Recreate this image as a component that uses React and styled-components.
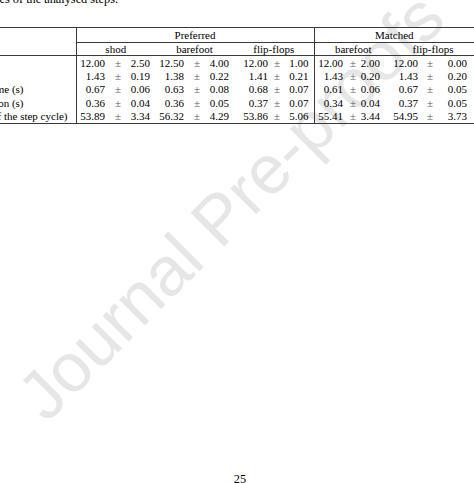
import styled, { createGlobalStyle } from 'styled-components';

const GlobalStyle = createGlobalStyle`
  html, body {
    margin: 0;
    padding: 0;
    background: #ffffff;
  }
`;

const groups = [
  { name: 'shod', cols: [35, 14, 30], pad: [6, 5] },
  { name: 'barefoot', cols: [35, 14, 30], pad: [6, 5] },
  { name: 'flip-flops', cols: [36, 14, 30], pad: [2, 5] },
  { name: 'barefoot', cols: [32, 14, 32], pad: [3, 12], divider: true },
  { name: 'flip-flops', cols: [31, 14, 37], pad: [5, 7] },
];

const rows = [
  {
    label: 'Number of steps',
    trail: 90,
    values: [['12.00', '2.50'], ['12.50', '4.00'], ['12.00', '1.00'], ['12.00', '2.00'], ['12.00', '0.00']],
  },
  {
    label: 'Step length (m)',
    trail: 90,
    values: [['1.43', '0.19'], ['1.38', '0.22'], ['1.41', '0.21'], ['1.43', '0.20'], ['1.43', '0.20']],
  },
  {
    label: 'Step time (s)',
    trail: 52,
    values: [['0.67', '0.06'], ['0.63', '0.08'], ['0.68', '0.07'], ['0.61', '0.06'], ['0.67', '0.05']],
  },
  {
    label: 'Swing duration (s)',
    trail: 52,
    values: [['0.36', '0.04'], ['0.36', '0.05'], ['0.37', '0.07'], ['0.34', '0.04'], ['0.37', '0.05']],
  },
  {
    label: 'Stance phase (% of the step cycle)',
    trail: 8,
    values: [['53.89', '3.34'], ['56.32', '4.29'], ['53.86', '5.06'], ['55.41', '3.44'], ['54.95', '3.73']],
  },
];

const App = () => {
  return (
    <>
      <GlobalStyle />
      <Page>
        <Watermark>Journal Pre-proofs</Watermark>

        <Caption>
          <span>Table 2. Means and standard deviations of the spatiotemporal features of the analysed steps.</span>
        </Caption>

        <Table>
          <colgroup>
            <col style={{ width: 76 }} />
            {groups.map((g, gi) =>
              g.cols.map((w, ci) => <col key={`${gi}-${ci}`} style={{ width: w }} />)
            )}
          </colgroup>
          <thead>
            <HeadRow $height={15}>
              <LabelHead rowSpan={2} />
              <GroupHead colSpan={9}>Preferred</GroupHead>
              <GroupHead colSpan={6} $divider>
                Matched
              </GroupHead>
            </HeadRow>
            <HeadRow $height={13}>
              {groups.map((g, gi) => (
                <GroupHead key={gi} colSpan={3} $divider={g.divider}>
                  {g.name}
                </GroupHead>
              ))}
            </HeadRow>
          </thead>
          <tbody>
            {rows.map((r, ri) => (
              <DataRow key={ri} $last={ri === rows.length - 1}>
                <LabelCell>
                  <LabelText $trail={r.trail}>
                    <span>{r.label}</span>
                  </LabelText>
                </LabelCell>
                {r.values.map(([m, sd], gi) => (
                  <Group key={gi} mean={m} sd={sd} group={groups[gi]} />
                ))}
              </DataRow>
            ))}
          </tbody>
        </Table>

        <Footer>25</Footer>
      </Page>
    </>
  );
};

const Group = ({ mean, sd, group }) => (
  <>
    <Num $pad={group.pad[0]} $divider={group.divider}>
      {mean}
    </Num>
    <Pm>±</Pm>
    <Num $pad={group.pad[1]}>{sd}</Num>
  </>
);

const Page = styled.div`
  position: relative;
  z-index: 0;
  width: 474px;
  height: 483px;
  overflow: hidden;
  display: flex;
  flex-direction: column;
  background: #ffffff;
  color: #000000;
  font-family: 'Liberation Serif', 'Times New Roman', serif;
`;

const Watermark = styled.div`
  position: absolute;
  z-index: -1;
  left: 46px;
  top: 366px;
  font-family: 'Liberation Sans', Arial, sans-serif;
  font-size: 69px;
  line-height: 1;
  color: #e6e6e6;
  white-space: nowrap;
  transform-origin: 0 57px;
  transform: rotate(-45deg);
  pointer-events: none;
`;

const Caption = styled.div`
  display: flex;
  justify-content: flex-end;
  width: 118px;
  height: 14px;
  margin-top: -8px;
  font-size: 12.3px;
  line-height: 14px;
  white-space: nowrap;

  span {
    flex-shrink: 0;
  }
`;

const Table = styled.table`
  margin-top: 21px;
  width: 474px;
  table-layout: fixed;
  border-collapse: collapse;
  border-top: 1px solid #3a3a3a;
  font-size: 11px;
  line-height: 12px;
`;

const HeadRow = styled.tr`
  height: ${(p) => p.$height}px;
`;

const LabelHead = styled.th`
  padding: 0;
  border-right: 1px solid #3a3a3a;
  border-bottom: 1px solid #3a3a3a;
`;

const GroupHead = styled.th`
  padding: 0;
  font-weight: 400;
  text-align: center;
  white-space: nowrap;
  border-bottom: 1px solid #3a3a3a;
  border-left: ${(p) => (p.$divider ? '1px solid #3a3a3a' : 'none')};
`;

const DataRow = styled.tr`
  height: 13.6px;
  border-bottom: ${(p) => (p.$last ? '1px solid #3a3a3a' : 'none')};
`;

const LabelCell = styled.td`
  padding: 0;
  border-right: 1px solid #3a3a3a;
`;

const LabelText = styled.div`
  display: flex;
  justify-content: flex-end;
  padding-right: ${(p) => p.$trail}px;
  white-space: nowrap;

  span {
    flex-shrink: 0;
  }
`;

const Num = styled.td`
  padding: 0 ${(p) => p.$pad}px 0 0;
  text-align: right;
  white-space: nowrap;
  border-left: ${(p) => (p.$divider ? '1px solid #3a3a3a' : 'none')};
`;

const Pm = styled.td`
  padding: 0;
  text-align: center;
  color: #555;
`;

const Footer = styled.div`
  margin-top: auto;
  margin-bottom: -3px;
  height: 14px;
  padding-left: 6px;
  text-align: center;
  font-size: 12.3px;
  line-height: 14px;
`;

export default App;
